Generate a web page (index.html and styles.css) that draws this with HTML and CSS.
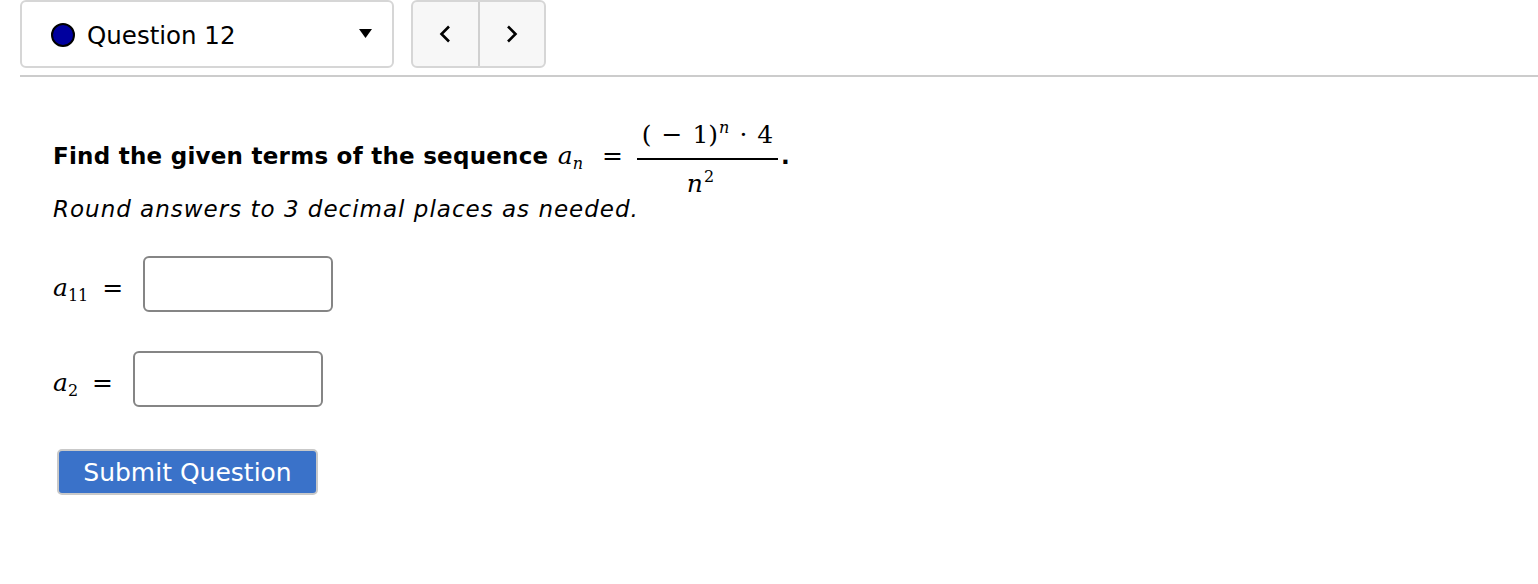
FILE: index.html
```html
<!DOCTYPE html>
<html>
<head>
<meta charset="utf-8">
<link rel="stylesheet" href="styles.css">
</head>
<body>
<div class="top">
  <div class="qselect">
    <span class="dot"></span>
    <span class="qlabel">Question 12</span>
    <svg class="caret" width="13" height="10" viewBox="0 0 13 10"><polygon points="0,0 13,0 6.5,9" fill="#000"/></svg>
  </div>
  <div class="nav">
    <span class="navbtn prev"><svg width="14" height="18" viewBox="0 0 14 18"><polyline points="11,1.5 3.5,9 11,16.5" fill="none" stroke="#000" stroke-width="2.6"/></svg></span>
    <span class="navbtn next"><svg width="14" height="18" viewBox="0 0 14 18"><polyline points="3,1.5 10.5,9 3,16.5" fill="none" stroke="#000" stroke-width="2.6"/></svg></span>
  </div>
</div>
<div class="rule"></div>
<div class="content">
  <p class="prompt"><b class="bold">Find the given terms of the sequence</b> <span class="math an"><i>a</i><sub class="mi">n</sub><span class="op">=</span><span class="frac"><span class="num"><span>(</span><span class="bin">−</span><span>1)</span><sup class="mi">n</sup><span class="bin">·</span><span>4</span></span><span class="den"><i>n</i><sup>2</sup></span></span></span><b class="dot-end">.</b></p>
  <p class="note">Round answers to 3 decimal places as needed.</p>
  <div class="answer">
    <span class="math label"><i>a</i><sub>11</sub><span class="op">=</span></span>
    <span class="box"></span>
  </div>
  <div class="answer">
    <span class="math label"><i>a</i><sub>2</sub><span class="op">=</span></span>
    <span class="box"></span>
  </div>
  <button class="submit">Submit Question</button>
</div>
</body>
</html>
```

FILE: styles.css
```css
html, body {
  margin: 0;
  padding: 0;
  background: #ffffff;
  color: #000000;
  font-family: "DejaVu Sans", Verdana, sans-serif;
}

.top {
  display: flex;
  gap: 17px;
  padding-left: 20px;
}

.qselect {
  box-sizing: border-box;
  width: 374px;
  height: 68px;
  border: 2px solid #d6d6d6;
  border-radius: 6px;
  display: flex;
  align-items: center;
  padding-left: 29px;
  padding-right: 20px;
}

.dot {
  box-sizing: border-box;
  width: 24px;
  height: 24px;
  border-radius: 50%;
  background: #00009e;
  border: 2px solid #000;
  margin-top: 1px;
}

.qlabel {
  margin-left: 12px;
  margin-top: 3px;
  font-size: 24.5px;
}

.caret {
  margin-left: auto;
}

.nav {
  box-sizing: border-box;
  width: 135px;
  height: 68px;
  border: 2px solid #d6d6d6;
  border-radius: 6px;
  background: #f7f7f7;
  display: flex;
}

.navbtn {
  flex: 1;
  display: flex;
  align-items: center;
  justify-content: center;
}

.navbtn.prev {
  border-right: 2px solid #d0d0d0;
}

.rule {
  height: 2px;
  background: #cccccc;
  margin: 7px 0 0 20px;
}

.content {
  padding-left: 53px;
}

.prompt {
  margin: 43px 0 0;
  font-size: 23px;
}

.bold {
  letter-spacing: 0.25px;
}

.math {
  font-family: "DejaVu Serif", "Liberation Serif", serif;
  font-size: 25px;
}

.an {
  margin-left: 2px;
}

.math i {
  font-style: italic;
}

.math sub, .math sup {
  font-size: 16px;
  font-style: normal;
  line-height: 0;
}

.math sub {
  vertical-align: -5px;
}

.math sup {
  vertical-align: 10px;
}

.math .mi {
  font-style: italic;
}

.an .op {
  margin: 0 14px 0 19px;
}

.frac {
  display: inline-flex;
  flex-direction: column;
  align-items: center;
  vertical-align: 21px;
  line-height: 1.16;
}

.num {
  box-sizing: border-box;
  width: 141px;
  padding-bottom: 9px;
  border-bottom: 2px solid #000;
  text-align: center;
}

.bin {
  margin: 0 10px;
}

.num sup {
  margin-left: 1px;
}

.den {
  padding-top: 9px;
  margin-right: 14px;
}

.den sup {
  margin-left: 1px;
}

.dot-end {
  margin-left: 3px;
}

.note {
  margin: -2px 0 0;
  font-size: 23px;
  font-style: italic;
  letter-spacing: 1px;
}

.answer {
  display: flex;
  align-items: center;
  margin-top: 34px;
}

.answer + .answer {
  margin-top: 39px;
}

.label {
  padding-top: 6px;
}

.label .op {
  margin: 0 20px 0 14px;
}

.box {
  box-sizing: border-box;
  width: 190px;
  height: 56px;
  border: 2px solid #858585;
  border-radius: 6px;
  background: #fff;
}

.submit {
  display: block;
  margin: 42px 0 0 4px;
  box-sizing: border-box;
  width: 261px;
  height: 46px;
  background: #3a72c9;
  color: #fff;
  border: 2px solid #c9c9c9;
  border-radius: 5px;
  font-family: "DejaVu Sans", Verdana, sans-serif;
  font-size: 25px;
  padding: 0;
}
```
